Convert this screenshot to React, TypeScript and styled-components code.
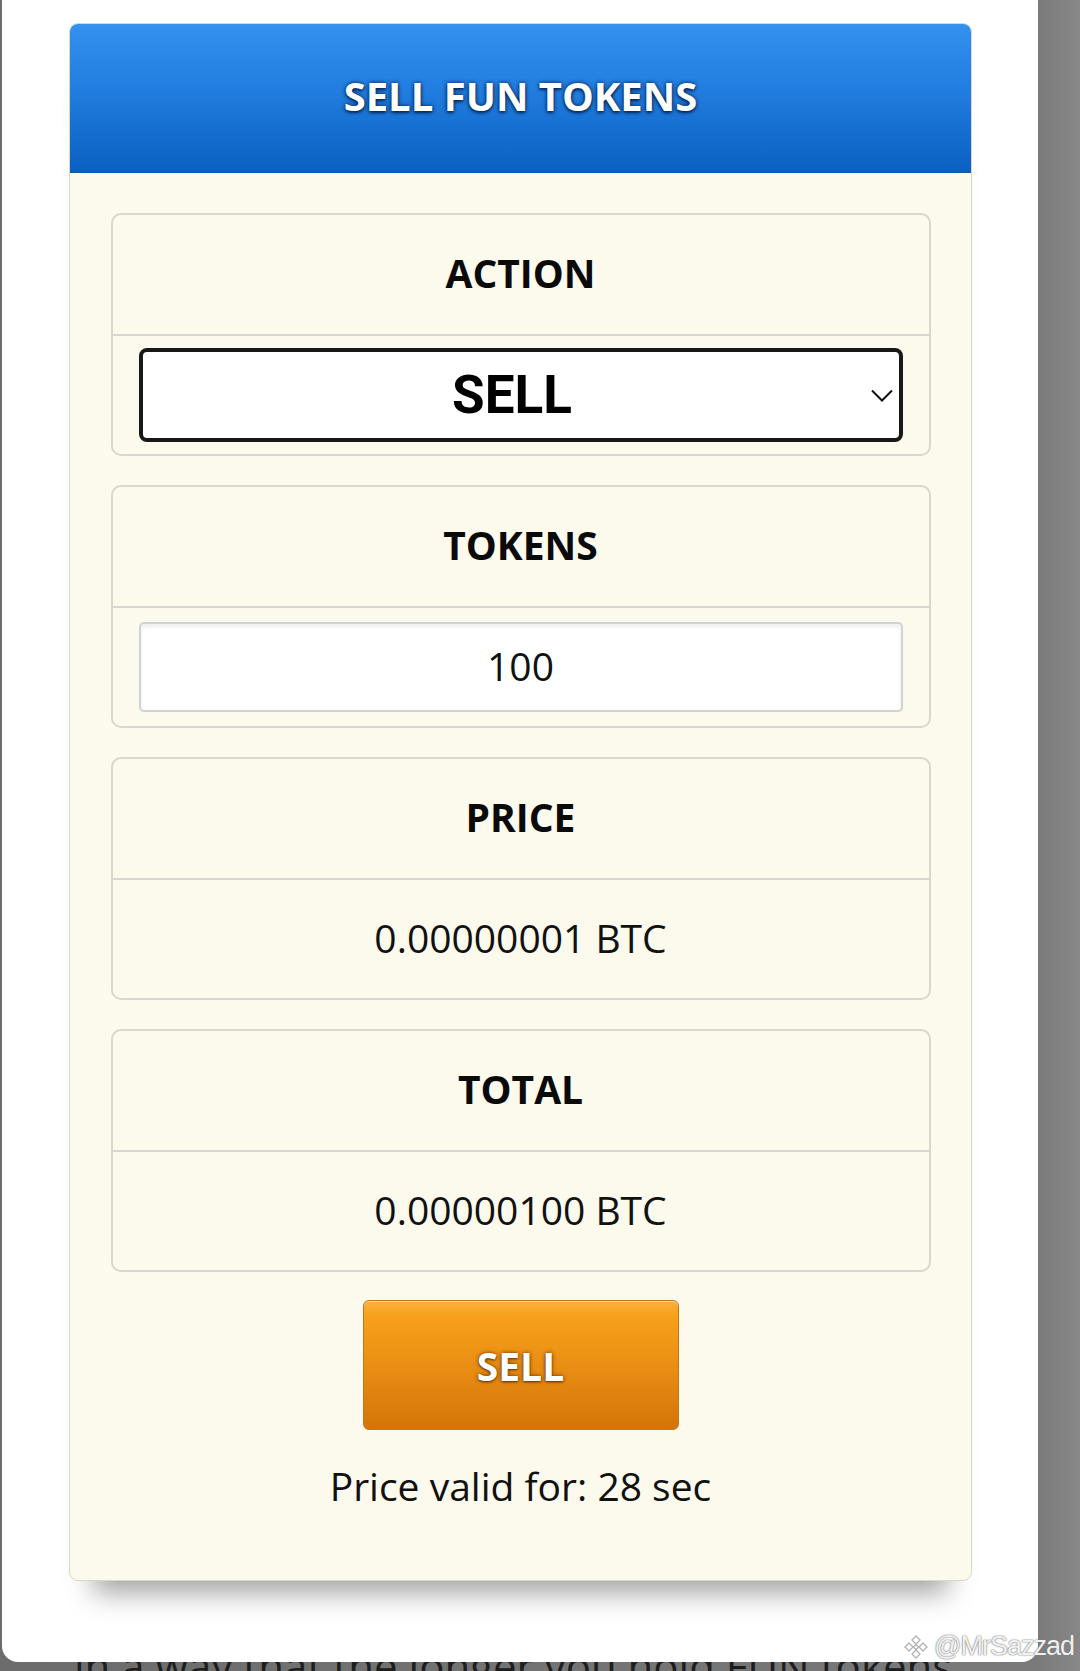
import React, { useState } from 'react';
import styled, { createGlobalStyle } from "styled-components";

const GlobalStyle = createGlobalStyle`
    html, body {
        margin: 0;
        padding: 0;
        background: #7b7b7b;
        overflow: hidden;
    }
    * {
        box-sizing: border-box;
    }
`;

function Chevron() {
    return (
        <svg width="22" height="13" viewBox="0 0 22 13" fill="none">
            <path d="M1 1.5 L11 11.5 L21 1.5" stroke="#111" strokeWidth="2" strokeLinejoin="miter" />
        </svg>
    );
}

function BinanceMark() {
    return (
        <svg width="26" height="26" viewBox="0 0 26 26" fill="none">
            <g stroke="#b5b5b5" strokeWidth="1.4" fill="rgba(255,255,255,0.7)">
                <path d="M13 2 L17 6 L13 10 L9 6 Z" />
                <path d="M13 16 L17 20 L13 24 L9 20 Z" />
                <path d="M6 9 L10 13 L6 17 L2 13 Z" />
                <path d="M20 9 L24 13 L20 17 L16 13 Z" />
                <path d="M13 10.5 L15.5 13 L13 15.5 L10.5 13 Z" />
            </g>
        </svg>
    );
}

function InfoBox({ title, children }: { title: string; children: React.ReactNode }) {
    return (
        <SBox>
            <STitleRow>{title}</STitleRow>
            <SContentRow>{children}</SContentRow>
        </SBox>
    );
}

function App() {
    const [tokens, setTokens] = useState('100');
    const [seconds] = useState(28);

    return (
        <>
        <GlobalStyle />
        <SScreen>
            <SSheet>
                <SCard>
                    <SHeader>SELL FUN TOKENS</SHeader>
                    <SBody>
                        <InfoBox title="ACTION">
                            <SSelect>
                                <span>SELL</span>
                                <Chevron />
                            </SSelect>
                        </InfoBox>
                        <InfoBox title="TOKENS">
                            <SInput
                                type="text"
                                name="tokens"
                                value={tokens}
                                onChange={(e) => setTokens(e.target.value)}
                            />
                        </InfoBox>
                        <InfoBox title="PRICE">
                            <SValue>0.00000001 BTC</SValue>
                        </InfoBox>
                        <InfoBox title="TOTAL">
                            <SValue>0.00000100 BTC</SValue>
                        </InfoBox>
                        <SSellButton type="button">SELL</SSellButton>
                        <SValid>Price valid for: {seconds} sec</SValid>
                    </SBody>
                </SCard>
                <SWatermark>
                    <BinanceMark />
                    <span>@MrSazzad</span>
                </SWatermark>
            </SSheet>
            <SBehind>in a way that the longer you hold FUN tokens</SBehind>
        </SScreen>
        </>
    );
}

const SScreen = styled.div`
    width: 1080px;
    height: 1671px;
    overflow: hidden;
    background: linear-gradient(90deg, #6c6c6c 0%, #7a7a7a 96%, #888888 100%);
    display: flex;
    flex-direction: column;
`;

const SSheet = styled.div`
    position: relative;
    z-index: 1;
    width: 1036px;
    height: 1662px;
    margin-left: 2px;
    flex-shrink: 0;
    background: #ffffff;
    border-radius: 0 0 16px 16px;
    padding: 23px 0 0 67px;
`;

const SCard = styled.div`
    width: 903px;
    background: #fcfaec;
    border: 1px solid #d9d8c8;
    border-radius: 9px;
    box-shadow: 0 36px 26px -24px rgba(0, 0, 0, 0.36);
    overflow: hidden;
`;

const SHeader = styled.div`
    height: 149px;
    padding-bottom: 6px;
    display: flex;
    align-items: center;
    justify-content: center;
    background: linear-gradient(180deg, #3491ef 0%, #217ddf 45%, #0a60c0 100%);
    border-bottom: 1px solid #0b58ad;
    color: #ffffff;
    font-family: "Open Sans", "DejaVu Sans", sans-serif;
    font-weight: 700;
    font-size: 40px;
    text-shadow: 0 0 4px rgba(0, 20, 60, 0.9), 0 2px 3px rgba(0, 30, 80, 0.7);
`;

const SBody = styled.div`
    padding: 40px 41px 68px;
    display: flex;
    flex-direction: column;
    align-items: center;
    gap: 29px;
`;

const SBox = styled.div`
    width: 820px;
    border: 2px solid #d8d8cf;
    border-radius: 10px;
    display: flex;
    flex-direction: column;
`;

const STitleRow = styled.div`
    height: 121px;
    padding-bottom: 4px;
    display: flex;
    align-items: center;
    justify-content: center;
    border-bottom: 2px solid #d8d8cf;
    font-family: "Open Sans", "DejaVu Sans", sans-serif;
    font-weight: 700;
    font-size: 39px;
    color: #0a0a0a;
`;

const SContentRow = styled.div`
    height: 118px;
    display: flex;
    align-items: center;
    justify-content: center;
    padding: 0 26px;
`;

const SSelect = styled.div`
    width: 765px;
    height: 94px;
    background: #ffffff;
    border: 4px solid #181818;
    border-radius: 8px;
    display: grid;
    grid-template-columns: 1fr auto;
    align-items: center;
    padding: 0 6px 0 11px;
    font-family: Roboto, "Liberation Sans", sans-serif;
    font-weight: 700;
    font-size: 53px;
    color: #000000;

    span {
        text-align: center;
    }
`;

const SInput = styled.input`
    width: 765px;
    height: 90px;
    padding: 0 0 4px;
    background: #ffffff;
    border: 2px solid #d2d2d2;
    border-radius: 5px;
    box-shadow: inset 0 3px 4px rgba(0, 0, 0, 0.07);
    text-align: center;
    font-family: "Open Sans", "DejaVu Sans", sans-serif;
    font-size: 39px;
    color: #111111;
    outline: none;
`;

const SValue = styled.div`
    margin-bottom: 4px;
    font-family: "Open Sans", "DejaVu Sans", sans-serif;
    font-size: 39px;
    color: #111111;
`;

const SSellButton = styled.button`
    margin-top: -1px;
    width: 316px;
    height: 130px;
    border: 1px solid #c27716;
    border-radius: 6px;
    background: linear-gradient(180deg, #fbb03a 0%, #f7a01c 12%, #e88c12 55%, #d4740a 100%);
    box-shadow: inset 0 1px 0 rgba(255, 255, 255, 0.5);
    color: #ffffff;
    font-family: "Open Sans", "DejaVu Sans", sans-serif;
    font-weight: 700;
    font-size: 39px;
    text-shadow: 0 0 4px rgba(110, 50, 0, 0.95), 0 1px 2px rgba(90, 40, 0, 0.8);
    cursor: pointer;
`;

const SValid = styled.div`
    margin-top: 0;
    font-family: "Open Sans", "DejaVu Sans", sans-serif;
    font-size: 39px;
    color: #111111;
`;

const SWatermark = styled.div`
    position: absolute;
    right: -36px;
    bottom: 0;
    display: flex;
    align-items: center;
    gap: 5px;
    font-family: "Liberation Sans", "DejaVu Sans", sans-serif;
    font-size: 27px;
    letter-spacing: -1px;
    color: rgba(255, 255, 255, 0.92);
    text-shadow: 0 0 1px #6a6a6a, 0 0 2px #8a8a8a;
`;

const SBehind = styled.div`
    margin-top: -24px;
    padding-left: 74px;
    white-space: nowrap;
    font-family: "Open Sans", "DejaVu Sans", sans-serif;
    font-size: 42px;
    line-height: 56px;
    color: #1e1e1e;
`;

export default App;
